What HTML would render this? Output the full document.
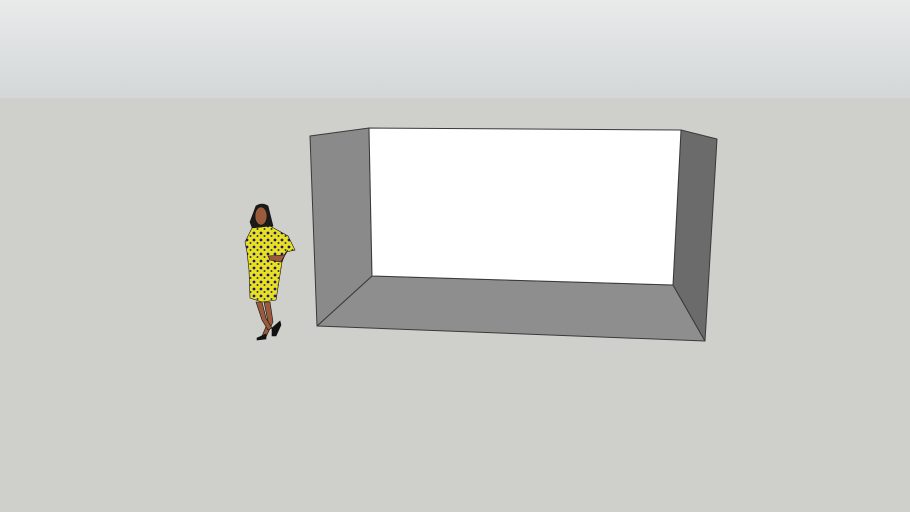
<!DOCTYPE html>
<html><head><meta charset="utf-8"><style>
html,body{margin:0;padding:0;width:910px;height:512px;overflow:hidden;background:#cfcfcb}
svg{display:block}
</style></head><body>
<svg width="910" height="512" viewBox="0 0 910 512">
<defs>
<linearGradient id="sky" x1="0" y1="0" x2="0" y2="1">
<stop offset="0" stop-color="#e9ebeb"/><stop offset="1" stop-color="#d3d7d7"/>
</linearGradient>
<pattern id="dots" width="7" height="7" patternUnits="userSpaceOnUse">
<rect width="7" height="7" fill="#e8e020"/>
<circle cx="2" cy="2" r="1.4" fill="#1a1a80"/>
<circle cx="5.5" cy="5" r="1" fill="#333"/>
</pattern>
</defs>
<rect x="0" y="0" width="910" height="98" fill="url(#sky)"/>
<rect x="0" y="98" width="910" height="414" fill="#cfcfcb"/>
<g stroke="#3a3a3a" stroke-width="1" stroke-linejoin="round">
<polygon points="372,276 673,285 705,341 317,326" fill="#8e8e8e"/>
<polygon points="310,136 369,128 372,276 317,326" fill="#8a8a8a"/>
<polygon points="681,130 717,139 705,341 673,285" fill="#6b6b6b"/>
<polygon points="369,128 681,130 673,285 372,276" fill="#ffffff"/>
</g>
<g stroke="#111" stroke-width="0.6">
<path d="M256,206 Q262,202 268,206 L273,226 L266,230 L253,230 L250,222 Z" fill="#1a1a1a"/>
<ellipse cx="261" cy="216" rx="6" ry="9" fill="#9a5a3c"/>
<path d="M264,302 L268,322 L262,336 L266,337 L273,322 L270,302 Z" fill="#9a5a3c"/>
<path d="M256,302 L262,320 L268,330 L272,328 L266,318 L262,302 Z" fill="#9a5a3c"/>
<path d="M257,338 L266,334 L266,339 L257,340 Z" fill="#111"/>
<path d="M272,328 L280,321 L281,325 L276,336 L272,336 Z" fill="#111"/>
<path d="M252,228 L270,226 L288,236 L295,250 L286,252 L282,262 L276,300 L262,302 L250,298 L249,270 L247,252 L245,242 Z" fill="url(#dots)"/>
<path d="M268,256 L284,255 L288,250 L281,262 L270,260 Z" fill="#9a5a3c"/>
</g>
</svg>
</body></html>
